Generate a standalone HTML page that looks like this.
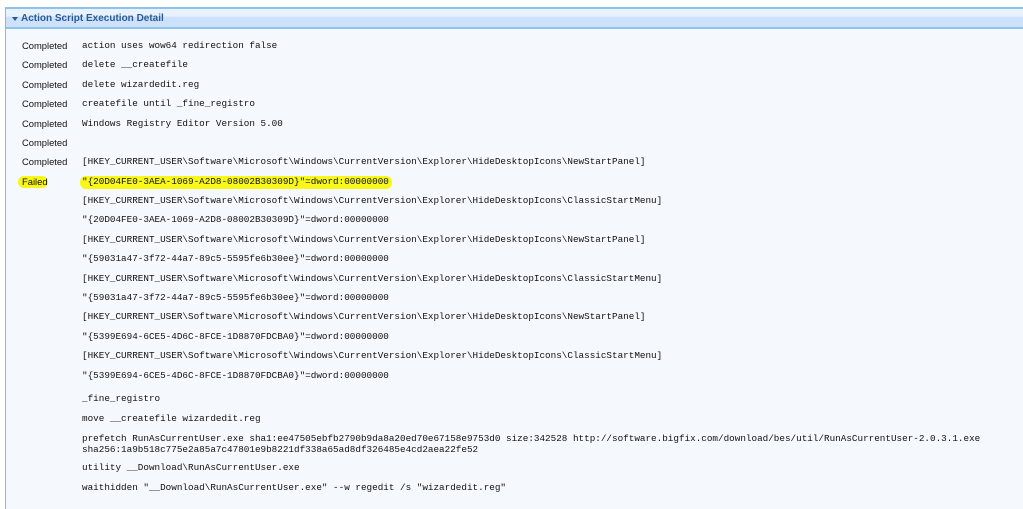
<!DOCTYPE html>
<html><head><style>
body{margin:0;width:1023px;height:503px;background:#fff;position:relative;overflow:hidden}
.panel{position:absolute;left:5px;top:7px;width:1030px;height:500px;background:#f5f8fd;border-left:1px solid #8fb5e0;border-top:2px solid #8ec3ea}
.hdr{position:absolute;left:0;top:0;right:0;height:18px;background:linear-gradient(#e8f2ff 0,#e8f2ff 40%,#cde1fb 45%,#cde1fb 100%);border-bottom:2px solid #8ec3ea}
.hdr span{position:absolute;left:15px;top:4px;font:bold 10px "Liberation Sans",sans-serif;color:#2a5a94}
.tri{position:absolute;left:6px;top:8px;width:0;height:0;border-left:3.5px solid transparent;border-right:3.5px solid transparent;border-top:4px solid #2a5a94}
.l{position:absolute;left:22px;font:9.4px "Liberation Sans",sans-serif;color:#111}
.m{position:absolute;left:82px;font:9.3px "Liberation Mono",monospace;color:#111;white-space:pre;line-height:10.5px}
.hl{position:absolute;background:#f7f71a;border-radius:6px}
</style></head><body>
<div class="panel"><div class="hdr"><div class="tri"></div><span>Action Script Execution Detail</span></div></div>
<div class="hl" style="left:18px;top:176px;width:30px;height:12px"></div>
<div class="hl" style="left:80px;top:176px;width:312px;height:13px"></div>
<div class="l" style="top:40px">Completed</div><div class="m" style="top:41px">action uses wow64 redirection false</div>
<div class="l" style="top:59px">Completed</div><div class="m" style="top:60px">delete __createfile</div>
<div class="l" style="top:79px">Completed</div><div class="m" style="top:80px">delete wizardedit.reg</div>
<div class="l" style="top:98px">Completed</div><div class="m" style="top:99px">createfile until _fine_registro</div>
<div class="l" style="top:118px">Completed</div><div class="m" style="top:119px">Windows Registry Editor Version 5.00</div>
<div class="l" style="top:137px">Completed</div>
<div class="l" style="top:156px">Completed</div><div class="m" style="top:157px">[HKEY_CURRENT_USER\Software\Microsoft\Windows\CurrentVersion\Explorer\HideDesktopIcons\NewStartPanel]</div>
<div class="l" style="top:176px">Failed</div><div class="m" style="top:177px">"{20D04FE0-3AEA-1069-A2D8-08002B30309D}"=dword:00000000</div>
<div class="m" style="top:196px">[HKEY_CURRENT_USER\Software\Microsoft\Windows\CurrentVersion\Explorer\HideDesktopIcons\ClassicStartMenu]</div>
<div class="m" style="top:215px">"{20D04FE0-3AEA-1069-A2D8-08002B30309D}"=dword:00000000</div>
<div class="m" style="top:235px">[HKEY_CURRENT_USER\Software\Microsoft\Windows\CurrentVersion\Explorer\HideDesktopIcons\NewStartPanel]</div>
<div class="m" style="top:254px">"{59031a47-3f72-44a7-89c5-5595fe6b30ee}"=dword:00000000</div>
<div class="m" style="top:274px">[HKEY_CURRENT_USER\Software\Microsoft\Windows\CurrentVersion\Explorer\HideDesktopIcons\ClassicStartMenu]</div>
<div class="m" style="top:293px">"{59031a47-3f72-44a7-89c5-5595fe6b30ee}"=dword:00000000</div>
<div class="m" style="top:312px">[HKEY_CURRENT_USER\Software\Microsoft\Windows\CurrentVersion\Explorer\HideDesktopIcons\NewStartPanel]</div>
<div class="m" style="top:332px">"{5399E694-6CE5-4D6C-8FCE-1D8870FDCBA0}"=dword:00000000</div>
<div class="m" style="top:351px">[HKEY_CURRENT_USER\Software\Microsoft\Windows\CurrentVersion\Explorer\HideDesktopIcons\ClassicStartMenu]</div>
<div class="m" style="top:371px">"{5399E694-6CE5-4D6C-8FCE-1D8870FDCBA0}"=dword:00000000</div>
<div class="m" style="top:394px">_fine_registro</div>
<div class="m" style="top:414px">move __createfile wizardedit.reg</div>
<div class="m" style="top:434px">prefetch RunAsCurrentUser.exe sha1:ee47505ebfb2790b9da8a20ed70e67158e9753d0 size:342528 http://software.bigfix.com/download/bes/util/RunAsCurrentUser-2.0.3.1.exe
sha256:1a9b518c775e2a85a7c47801e9b8221df338a65ad8df326485e4cd2aea22fe52</div>
<div class="m" style="top:463px">utility __Download\RunAsCurrentUser.exe</div>
<div class="m" style="top:483px">waithidden "__Download\RunAsCurrentUser.exe" --w regedit /s "wizardedit.reg"</div>
</body></html>
